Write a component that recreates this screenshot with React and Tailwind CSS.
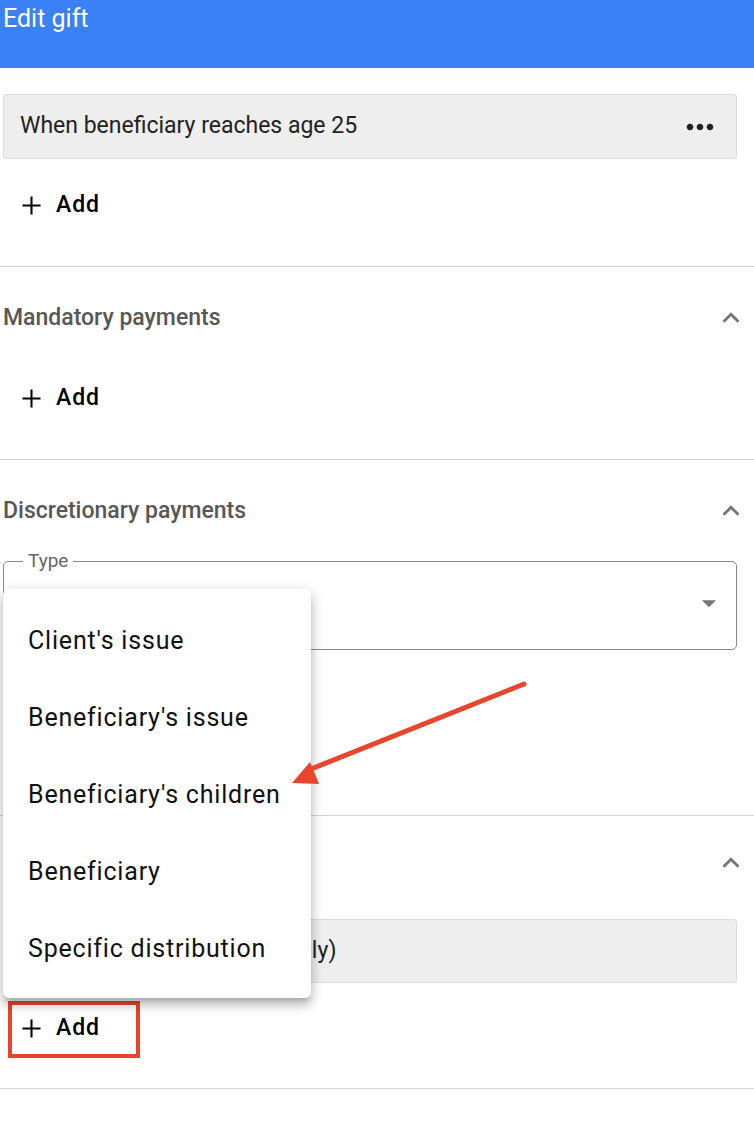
import { useState } from 'react';

const ExpandLess = () => (
  <svg viewBox="0 0 24 24" className="w-[34px] h-[34px] fill-[#757575]">
    <path d="M12 8l-6 6 1.41 1.41L12 10.83l4.59 4.58L18 14z" />
  </svg>
);

const PlusIcon = () => (
  <svg viewBox="0 0 24 24" className="w-[31px] h-[31px] fill-black">
    <path d="M19 12.8h-6.2V19h-1.6v-6.2H5v-1.6h6.2V5h1.6v6.2H19z" />
  </svg>
);

const MoreHoriz = () => (
  <svg viewBox="0 0 24 24" className="w-[40px] h-[40px] fill-[#222]">
    <path d="M6 10c-1.1 0-2 .9-2 2s.9 2 2 2 2-.9 2-2-.9-2-2-2zm12 0c-1.1 0-2 .9-2 2s.9 2 2 2 2-.9 2-2-.9-2-2-2zm-6 0c-1.1 0-2 .9-2 2s.9 2 2 2 2-.9 2-2-.9-2-2-2z" />
  </svg>
);

function AddButton() {
  return (
    <button className="flex items-center h-[46px] pl-[13px] pr-3 gap-[9px] text-[23px] font-medium tracking-[0.04em] text-black">
      <PlusIcon />
      <span>Add</span>
    </button>
  );
}

function GrayRow({ text, dots, wide }) {
  return (
    <div className={`h-full flex items-center justify-between bg-[#eeeeee] border border-[#dcdcdc] rounded-[3px] pl-[16px] pr-[16px] text-[23px] text-[#222] ${wide ? 'tracking-[0.2px]' : ''}`}>
      <span>{text}</span>
      {dots && <MoreHoriz />}
    </div>
  );
}

function SectionHeader({ title }) {
  return (
    <div className="flex items-center justify-between h-[34px]">
      <span className="text-[23px] font-medium text-[#575757]">{title}</span>
      <div className="-mr-[11px]"><ExpandLess /></div>
    </div>
  );
}

const menuItems = [
  "Client's issue",
  "Beneficiary's issue",
  "Beneficiary's children",
  'Beneficiary',
  'Specific distribution',
];

export default function App() {
  const [type, setType] = useState('');

  return (
    <div className="relative w-[754px] min-h-[1122px] bg-white overflow-hidden font-['Roboto',sans-serif]">
      <div className="h-[68px] bg-[#3a80f6] text-white text-[25px] leading-[30px] pl-[3px] pt-[4px]">
        Edit gift
      </div>

      {/* first section */}
      <div className="pl-[3px] pr-[17px] pt-[26px] border-b border-[#d4d4d4] h-[199px]">
        <div className="h-[65px]">
          <GrayRow text="When beneficiary reaches age 25" dots />
        </div>
        <div className="mt-[23px]"><AddButton /></div>
      </div>

      {/* mandatory */}
      <div className="pl-[3px] pr-[17px] pt-[34px] border-b border-[#d4d4d4] h-[193px]">
        <SectionHeader title="Mandatory payments" />
        <div className="mt-[40px]"><AddButton /></div>
      </div>

      {/* discretionary */}
      <div className="pl-[3px] pr-[17px] pt-[34px] border-b border-[#d4d4d4] h-[356px]">
        <SectionHeader title="Discretionary payments" />
        <fieldset className="mt-[26px] h-[96px] border border-[#8a8a8a] rounded-[5px] px-[14px] flex items-center justify-end">
          <legend className="px-[5px] ml-[5px] text-[19px] text-[#666] leading-[14px]">Type</legend>
          <select value={type} onChange={(e) => setType(e.target.value)} className="hidden">
            <option value="">Type</option>
          </select>
          <svg viewBox="0 0 24 24" className="w-[34px] h-[34px] fill-[#757575] -mr-[4px] -mt-[12px]">
            <path d="M7 10l5 5 5-5z" />
          </svg>
        </fieldset>
        <div className="mt-[24px]"><AddButton /></div>
      </div>

      {/* remainder */}
      <div className="pl-[3px] pr-[17px] pt-[30px] border-b border-[#d4d4d4] h-[273px]">
        <SectionHeader title="Remainder" />
        <div className="mt-[39px] h-[64px]">
          <GrayRow text="Beneficiary's children (equally)" wide />
        </div>
        <div className="relative mt-[22px] w-fit">
          <div className="absolute left-[5px] -top-[4px] w-[132px] h-[57px] border-[4px] border-[#e8452c]" />
          <AddButton />
        </div>
      </div>

      {/* dropdown menu */}
      <div className="absolute left-[3px] top-[589px] w-[308px] h-[409px] bg-white rounded-[6px] shadow-[0_5px_5px_-3px_rgba(0,0,0,0.2),0_8px_10px_1px_rgba(0,0,0,0.14),0_3px_14px_2px_rgba(0,0,0,0.12)] py-[13px]">
        {menuItems.map((item) => (
          <div key={item} className="h-[77px] flex items-center pl-[25px] text-[25px] text-[#111] tracking-[0.8px]">
            {item}
          </div>
        ))}
      </div>

      {/* annotation arrow */}
      <svg className="absolute left-0 top-0 w-[754px] h-[1122px] pointer-events-none" viewBox="0 0 754 1122">
        <line x1="524" y1="684" x2="306" y2="771" stroke="#e8452c" strokeWidth="5" strokeLinecap="round" />
        <polygon points="310,762 292,783 319,784" fill="#e8452c" />
      </svg>
    </div>
  );
}
